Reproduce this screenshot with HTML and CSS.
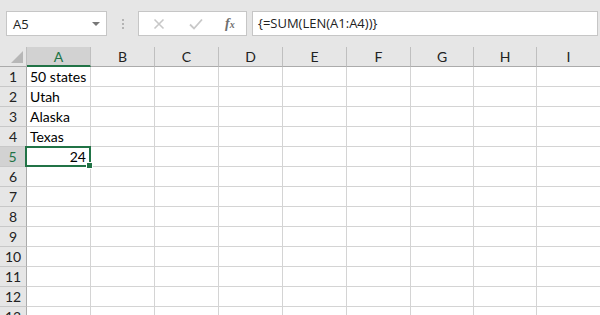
FILE: index.html
```html
<!DOCTYPE html>
<html>
<head>
    <meta charset="UTF-8">
    <title>LEN array formula</title>
    <link rel="stylesheet" href="styles.css">
</head>
<body>
    <div class="toolbar">
        <div class="name-box">
            <span>A5</span>
            <span class="caret"></span>
        </div>
        <div class="grip"><i></i><i></i><i></i></div>
        <div class="fx-buttons">
            <svg class="fx-icon" width="12" height="12" viewBox="0 0 12 12">
                <path d="M1.5 1.5 L10.5 10.5 M10.5 1.5 L1.5 10.5" stroke="#c8c8c8" stroke-width="1.6" fill="none"/>
            </svg>
            <svg class="fx-icon" width="14" height="12" viewBox="0 0 14 12">
                <path d="M1 6.5 L5 10.5 L13 1.5" stroke="#c8c8c8" stroke-width="1.8" fill="none"/>
            </svg>
            <span class="fx-label">f<sub>x</sub></span>
        </div>
        <div class="formula">{=SUM(LEN(A1:A4))}</div>
    </div>

    <div class="sheet">
        <div class="row head">
            <div class="corner"><span class="tri"></span></div>
            <div class="col selected">A</div>
            <div class="col">B</div>
            <div class="col">C</div>
            <div class="col">D</div>
            <div class="col">E</div>
            <div class="col">F</div>
            <div class="col">G</div>
            <div class="col">H</div>
            <div class="col">I</div>
        </div>
        <div class="row">
            <div class="num">1</div>
            <div class="cell">50 states</div>
            <div class="cell"></div><div class="cell"></div><div class="cell"></div><div class="cell"></div>
            <div class="cell"></div><div class="cell"></div><div class="cell"></div><div class="cell"></div>
        </div>
        <div class="row">
            <div class="num">2</div>
            <div class="cell">Utah</div>
            <div class="cell"></div><div class="cell"></div><div class="cell"></div><div class="cell"></div>
            <div class="cell"></div><div class="cell"></div><div class="cell"></div><div class="cell"></div>
        </div>
        <div class="row">
            <div class="num">3</div>
            <div class="cell">Alaska</div>
            <div class="cell"></div><div class="cell"></div><div class="cell"></div><div class="cell"></div>
            <div class="cell"></div><div class="cell"></div><div class="cell"></div><div class="cell"></div>
        </div>
        <div class="row">
            <div class="num">4</div>
            <div class="cell">Texas</div>
            <div class="cell"></div><div class="cell"></div><div class="cell"></div><div class="cell"></div>
            <div class="cell"></div><div class="cell"></div><div class="cell"></div><div class="cell"></div>
        </div>
        <div class="row">
            <div class="num selected">5</div>
            <div class="cell number active">24<span class="handle"></span></div>
            <div class="cell"></div><div class="cell"></div><div class="cell"></div><div class="cell"></div>
            <div class="cell"></div><div class="cell"></div><div class="cell"></div><div class="cell"></div>
        </div>
        <div class="row">
            <div class="num">6</div>
            <div class="cell"></div><div class="cell"></div><div class="cell"></div><div class="cell"></div><div class="cell"></div>
            <div class="cell"></div><div class="cell"></div><div class="cell"></div><div class="cell"></div>
        </div>
        <div class="row">
            <div class="num">7</div>
            <div class="cell"></div><div class="cell"></div><div class="cell"></div><div class="cell"></div><div class="cell"></div>
            <div class="cell"></div><div class="cell"></div><div class="cell"></div><div class="cell"></div>
        </div>
        <div class="row">
            <div class="num">8</div>
            <div class="cell"></div><div class="cell"></div><div class="cell"></div><div class="cell"></div><div class="cell"></div>
            <div class="cell"></div><div class="cell"></div><div class="cell"></div><div class="cell"></div>
        </div>
        <div class="row">
            <div class="num">9</div>
            <div class="cell"></div><div class="cell"></div><div class="cell"></div><div class="cell"></div><div class="cell"></div>
            <div class="cell"></div><div class="cell"></div><div class="cell"></div><div class="cell"></div>
        </div>
        <div class="row">
            <div class="num">10</div>
            <div class="cell"></div><div class="cell"></div><div class="cell"></div><div class="cell"></div><div class="cell"></div>
            <div class="cell"></div><div class="cell"></div><div class="cell"></div><div class="cell"></div>
        </div>
        <div class="row">
            <div class="num">11</div>
            <div class="cell"></div><div class="cell"></div><div class="cell"></div><div class="cell"></div><div class="cell"></div>
            <div class="cell"></div><div class="cell"></div><div class="cell"></div><div class="cell"></div>
        </div>
        <div class="row">
            <div class="num">12</div>
            <div class="cell"></div><div class="cell"></div><div class="cell"></div><div class="cell"></div><div class="cell"></div>
            <div class="cell"></div><div class="cell"></div><div class="cell"></div><div class="cell"></div>
        </div>
        <div class="row">
            <div class="num">13</div>
            <div class="cell"></div><div class="cell"></div><div class="cell"></div><div class="cell"></div><div class="cell"></div>
            <div class="cell"></div><div class="cell"></div><div class="cell"></div><div class="cell"></div>
        </div>
    </div>
</body>
</html>
```

FILE: styles.css
```css
body {
    margin: 0;
    padding: 0;
    width: 600px;
    height: 315px;
    overflow: hidden;
    background-color: #FFFFFF;
    font-family: "Lato", "Open Sans", sans-serif;
    color: #000000;
}

/* formula bar */

.toolbar {
    height: 47px;
    box-sizing: border-box;
    padding: 11px 0 0 6px;
    background-color: #E6E6E6;
    display: flex;
    align-items: flex-start;
}

.name-box,
.fx-buttons,
.formula {
    height: 25px;
    box-sizing: border-box;
    background-color: #FFFFFF;
    border: 1px solid #C6C6C6;
}

.name-box {
    width: 101px;
    display: flex;
    align-items: center;
    justify-content: space-between;
    padding: 0 6px 0 6px;
    font-family: "Open Sans", sans-serif;
    font-size: 13px;
    color: #222222;
}

.caret {
    width: 0;
    height: 0;
    border-left: 4px solid transparent;
    border-right: 4px solid transparent;
    border-top: 4px solid #777777;
}

.grip {
    width: 31px;
    height: 25px;
    display: flex;
    flex-direction: column;
    align-items: center;
    justify-content: center;
    gap: 2px;
}

.grip i {
    display: block;
    width: 2px;
    height: 2px;
    background-color: #B4B4B4;
}

.fx-buttons {
    width: 109px;
    display: flex;
    align-items: center;
    padding-left: 14px;
}

.fx-icon {
    display: block;
}

.fx-icon + .fx-icon {
    margin-left: 24px;
}

.fx-label {
    margin-left: 22px;
    font-family: "Liberation Serif", serif;
    font-style: italic;
    font-weight: bold;
    font-size: 14px;
    color: #6E6E6E;
}

.fx-label sub {
    font-size: 10px;
    vertical-align: baseline;
}

.formula {
    margin-left: 5px;
    width: 346px;
    padding-left: 5px;
    font-family: "Open Sans", sans-serif;
    font-size: 13px;
    line-height: 23px;
    color: #222222;
}

/* grid */

.row {
    display: grid;
    grid-template-columns: 27px 64px 64px 64px 64px 64px 64px 63px 63px 64px;
    height: 20px;
}

.row > div {
    box-sizing: border-box;
    height: 20px;
    line-height: 19px;
    font-size: 14px;
}

.cell {
    border-right: 1px solid #D4D4D4;
    border-bottom: 1px solid #D4D4D4;
    padding-left: 3px;
    white-space: nowrap;
}

.cell.number {
    text-align: right;
    padding-right: 4px;
}

.head > div {
    background-color: #E6E6E6;
    border-right: 1px solid #BFBFBF;
    border-bottom: 1px solid #ABABAB;
    text-align: center;
    color: #222222;
}

.corner {
    position: relative;
}

.tri {
    position: absolute;
    right: 3px;
    bottom: 3px;
    width: 0;
    height: 0;
    border-left: 12px solid transparent;
    border-bottom: 12px solid #B7B7B7;
}

.num {
    background-color: #E6E6E6;
    border-right: 1px solid #ABABAB;
    border-bottom: 1px solid #C8C8C8;
    text-align: center;
    color: #222222;
}

.head .selected {
    background-color: #D2D2D2;
    color: #217346;
    border-bottom: 2px solid #217346;
}

.num.selected {
    background-color: #D2D2D2;
    color: #217346;
    border-right: 2px solid #217346;
}

.active {
    position: relative;
}

.active::after {
    content: "";
    position: absolute;
    left: -2px;
    top: -1px;
    right: -1px;
    bottom: -1px;
    border: 2px solid #217346;
}

.handle {
    position: absolute;
    right: -3px;
    bottom: -3px;
    width: 5px;
    height: 5px;
    background-color: #217346;
    border: 1px solid #FFFFFF;
    z-index: 2;
}
```
